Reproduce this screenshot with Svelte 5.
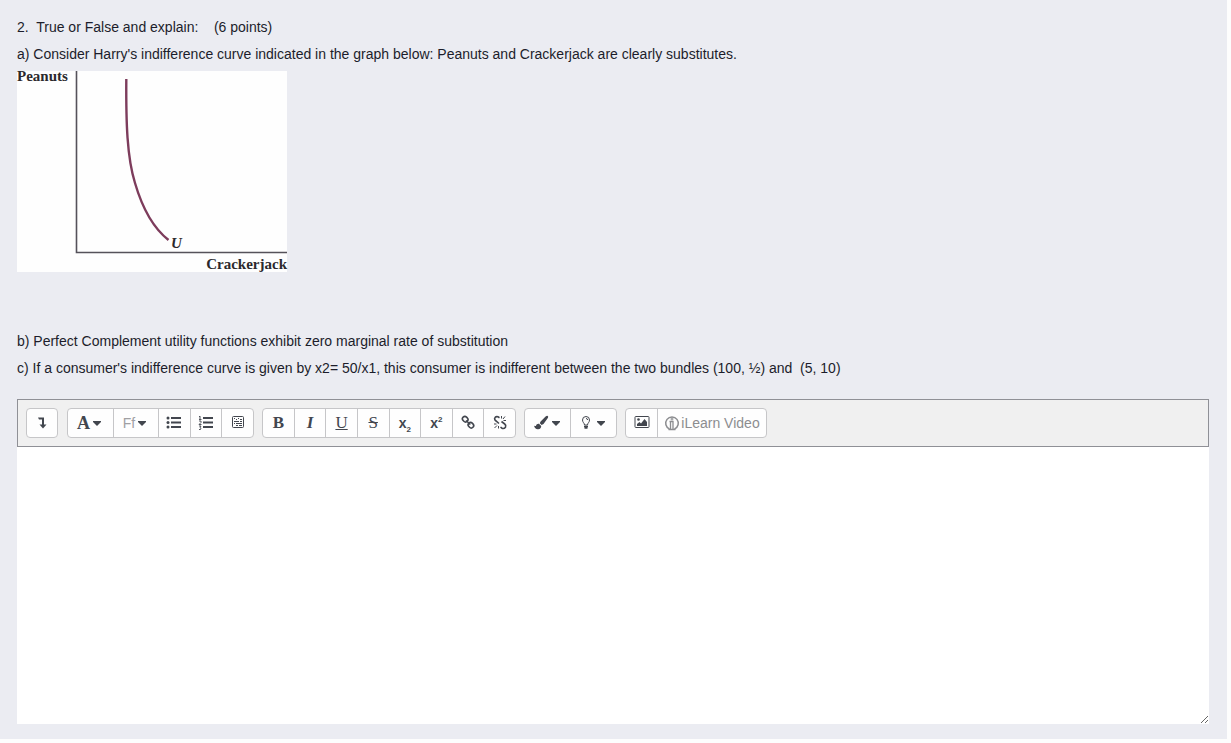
<script>
    let answer = $state('')
</script>

{#snippet caret()}
    <svg class="caret" width="8" height="5" viewBox="0 0 8 5" aria-hidden="true">
        <path d="M0 0h8v1L4 5 0 1z" fill="currentColor" />
    </svg>
{/snippet}

<main>
    <section class="question">
        <p>2.&nbsp; True or False and explain:&nbsp; &nbsp; (6 points)</p>
        <p>a) Consider Harry's indifference curve indicated in the graph below: Peanuts and Crackerjack are clearly substitutes.</p>
        <svg class="graph" width="270" height="201" viewBox="0 0 270 201" role="img" aria-label="Indifference curve for Peanuts and Crackerjack">
            <rect width="270" height="201" fill="#fefefe" />
            <path d="M59.5 0V181.5H270" fill="none" stroke="#55525a" stroke-width="1.6" />
            <path d="M109.3 8C109 52 110 86 118 112C125 136 135 156 151.500 169" fill="none" stroke="#7d3c5c" stroke-width="2.400" />
            <text x="0" y="10">Peanuts</text>
            <text x="154" y="177" class="curve-name">U</text>
            <text x="270" y="198" text-anchor="end">Crackerjack</text>
        </svg>
    </section>

    <section class="question">
        <p>b) Perfect Complement utility functions exhibit zero marginal rate of substitution</p>
        <p>c) If a consumer's indifference curve is given by x2= 50/x1, this consumer is indifferent between the two bundles (100, ½) and&nbsp; (5, 10)</p>
    </section>

    <div class="editor">
        <div class="toolbar" role="toolbar" aria-label="Editor">
            <div class="group single">
                <button type="button" title="Show more buttons">
                    <svg width="16" height="16" viewBox="0 0 16 16">
                        <path d="M4 2.500h6v7h2.500l-3.500 4-3.500-4H8v-5H5z" fill="currentColor" />
                    </svg>
                </button>
            </div>

            <div class="group styles">
                <button type="button" class="wide" title="Paragraph styles"><b class="serif letter-a">A</b>{@render caret()}</button>
                <button type="button" class="wide" title="Font family"><span class="font-icon">Ff</span>{@render caret()}</button>
                <button type="button" title="Unordered list">
                    <svg width="16" height="16" viewBox="0 0 16 16">
                        <path d="M5 2h10v2H5zM5 6.500h10v2H5zM5 11h10v2H5z" fill="currentColor" />
                        <circle cx="2" cy="3" r="1.500" fill="currentColor" />
                        <circle cx="2" cy="7.500" r="1.500" fill="currentColor" />
                        <circle cx="2" cy="12" r="1.500" fill="currentColor" />
                    </svg>
                </button>
                <button type="button" title="Ordered list">
                    <svg width="16" height="16" viewBox="0 0 16 16">
                        <path d="M5 2h10v2H5zM5 6.500h10v2H5zM5 11h10v2H5z" fill="currentColor" />
                        <path d="M1 2l1-1v3.500M1 4.500h2.500M1 6h2v1.500L1 9.500h2.500M1 11h2L2 12.500l1 .8L2.500 14.500H1" fill="none" stroke="currentColor" stroke-width=".9" />
                    </svg>
                </button>
                <button type="button" title="Checklist">
                    <svg width="16" height="16" viewBox="0 0 16 16" fill="none" stroke="currentColor">
                        <rect x="2.500" y="1.500" width="11" height="11" rx="1" />
                        <path d="M4 3.500h1M6 4.500h1M8 3.500h1M10 4.500h2M4 6.500h5M10 6.500h2M4 8.500h1M6 8.500h6M6 10.500h2M9 10.500h3" />
                    </svg>
                </button>
            </div>

            <div class="group formats">
                <button type="button" title="Bold"><b class="serif">B</b></button>
                <button type="button" title="Italic"><i class="serif">I</i></button>
                <button type="button" title="Underline"><u class="serif">U</u></button>
                <button type="button" title="Strike through"><s class="serif">S</s></button>
                <button type="button" title="Subscript"><span class="script">x<sub>2</sub></span></button>
                <button type="button" title="Superscript"><span class="script">x<sup>2</sup></span></button>
                <button type="button" title="Link">
                    <svg width="16" height="16" viewBox="0 0 16 16" fill="none" stroke="currentColor" stroke-width="1.600">
                        <rect x="2.300" y="1.800" width="5.800" height="4.800" rx="2.400" transform="rotate(45 5.200 4.200)" />
                        <rect x="8" y="7.800" width="5.800" height="4.800" rx="2.400" transform="rotate(45 10.900 10.200)" />
                        <path d="M6 5.500l4.300 4" />
                    </svg>
                </button>
                <button type="button" title="Unlink">
                    <svg width="16" height="16" viewBox="0 0 16 16" fill="none" stroke="currentColor" stroke-width="1.600">
                        <path d="M7.500 2.700L6 1.800Q3.500 1 2.600 3.500Q2.500 5 4 6L7 8.500M8.500 12l1.500 1.200q2 .8 3.500-1q.8-2-.8-3.200L9.500 6.500" />
                        <path d="M9.500 3.500V1M11 4l2-2.500M11.500 5.500H14M6.500 11V13.500M5 10.500l-2.500 2.500M4.500 9H2" stroke-width="1" />
                    </svg>
                </button>
            </div>

            <div class="group colors">
                <button type="button" class="wide" title="Font colour">
                    <svg width="16" height="16" viewBox="0 0 16 16" fill="currentColor">
                        <path d="M14.300.7q1.400.3.700 2L10.500 9 8.600 10 6.800 8.200l.8-1.800L12.600 1.500q1-.9 1.700-.8zM6 8.800l2.200 2.200q0 2.800-3 3.300Q2 14.700 1 10.500q1 .8 1.800.5Q3.500 8.500 6 8.800z" />
                    </svg>
                    {@render caret()}
                </button>
                <button type="button" class="wide" title="Background colour">
                    <svg width="16" height="16" viewBox="0 0 16 16" fill="none" stroke="currentColor">
                        <path d="M6.500 10C6.500 8 4.500 7.500 4.500 5a3.500 3.500 0 0 1 7 0C11.500 7.500 9.500 8 9.500 10zM8 3.500q1.500 0 1.700 1.500" />
                        <path d="M6 11.500h4M6.500 13h3" stroke-width="1.300" />
                    </svg>
                    {@render caret()}
                </button>
            </div>

            <div class="group media">
                <button type="button" class="image" title="Image">
                    <svg width="16" height="16" viewBox="0 0 16 16">
                        <rect x="1" y="1.500" width="14" height="11" rx=".8" fill="none" stroke="currentColor" />
                        <circle cx="4.500" cy="4.500" r="1.300" fill="currentColor" />
                        <path d="M3 11V9l2.500-2L7 8.500 10.500 4 13 7v4z" fill="currentColor" />
                    </svg>
                </button>
                <button type="button" class="video">
                    <svg width="16" height="16" viewBox="0 0 16 16" fill="none" stroke="currentColor">
                        <path d="M5.500 14A6.300 6.300 0 1 1 10.500 14" stroke-width="1.500" />
                        <path d="M5.500 6.500h3.500V14.500M6.500 6.500v8M4.500 14.500h7" stroke-width="1.300" />
                        <circle cx="8" cy="4" r="1" />
                    </svg>
                    iLearn Video
                </button>
            </div>
        </div>
        <textarea aria-label="Answer" bind:value={answer}></textarea>
    </div>
</main>

<style>
    :global(body) {
        margin: 0;
        background: #fdfdfd;
    }

    main {
        margin: 0 4px 4px 0;
        padding: 17px 18px 15px 17px;
        background: #ebecf2;
        color: #1c1d2b;
        font-family: "Liberation Sans", Arial, sans-serif;
        font-size: 14px;
        line-height: 20px;
    }

    p {
        margin: 0 0 7px;
    }

    .question + .question {
        margin-top: 59px;
    }

    .graph {
        display: block;
        overflow: visible;
    }

    .graph text {
        font: bold 15px "Liberation Serif", serif;
        fill: #2b292d;
    }

    .graph .curve-name {
        font-style: italic;
    }

    .editor {
        margin-top: 21px;
    }

    .toolbar {
        display: flex;
        flex-wrap: wrap;
        gap: 8px;
        padding: 8px;
        border: 1px solid #8f9096;
        background: #f0f0f0;
    }

    .group {
        display: flex;
        box-sizing: border-box;
        height: 30px;
        border: 1px solid #c6c6c8;
        border-radius: 4px;
        background: #fefefe;
    }

    .single {
        width: 32px;
        margin-right: 1px;
    }

    .styles {
        width: 187px;
    }

    .formats {
        width: 254px;
    }

    .colors {
        width: 93px;
    }

    .media {
        width: 142px;
    }

    button {
        display: flex;
        flex: 1;
        align-items: center;
        justify-content: center;
        min-width: 0;
        padding: 0;
        border: 0;
        background: none;
        color: #42464e;
        font: inherit;
        cursor: pointer;
    }

    button + button {
        border-left: 1px solid #c6c6c8;
    }

    .wide {
        flex: 0 0 45px;
        box-sizing: border-box;
        gap: 3px;
        padding-right: 3px;
    }

    .image {
        flex: 0 0 31px;
    }

    .video {
        gap: 1px;
        color: #8c8d90;
    }

    .serif {
        font-family: "Liberation Serif", serif;
        font-size: 17px;
    }

    i {
        font-weight: bold;
    }

    .letter-a {
        font-size: 18px;
    }

    .font-icon {
        color: #a0a0a3;
    }

    .script {
        font-size: 14px;
        font-weight: bold;
    }

    sub, sup {
        font-size: 8px;
        line-height: 0;
    }

    textarea {
        display: block;
        box-sizing: border-box;
        width: 100%;
        height: 277px;
        padding: 6px;
        border: 0;
        outline: 0;
        background: #fff;
        font: inherit;
        resize: both;
    }
</style>
